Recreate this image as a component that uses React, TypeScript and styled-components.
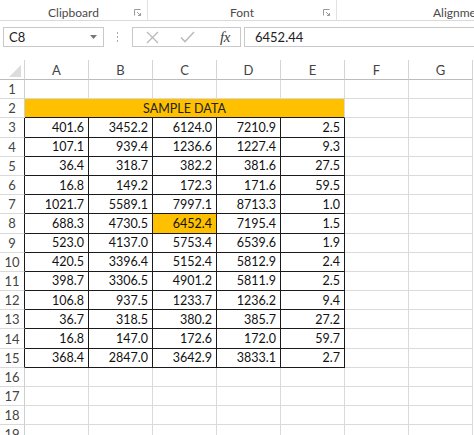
import React from "react";
import styled, { createGlobalStyle } from "styled-components";

const GlobalStyle = createGlobalStyle`
  html, body {
    margin: 0;
    padding: 0;
    background: #fff;
  }
  body {
    width: 474px;
    height: 435px;
    overflow: hidden;
    font-family: Lato, "Liberation Sans", Arial, sans-serif;
  }
`;

const Page = styled.div`
  display: flex;
  flex-direction: column;
  width: 474px;
  height: 435px;
  overflow: hidden;
  background: #fff;
  & > * {
    flex-shrink: 0;
  }
`;

const Ribbon = styled.div`
  display: flex;
  height: 21px;
  border-bottom: 1px solid #dadada;
  box-sizing: border-box;
`;

const Group = styled.div<{ $w: number; $sep?: boolean; $indent?: number }>`
  display: flex;
  align-items: flex-end;
  justify-content: ${(p) => (p.$indent ? "flex-start" : "center")};
  padding: 0 0 0 ${(p) => p.$indent ?? 0}px;
  position: relative;
  width: ${(p) => p.$w}px;
  flex-shrink: 0;
  height: 20px;
  line-height: 15px;
  border-right: ${(p) => (p.$sep ? "1px solid #e2e2e2" : "none")};
  font-size: 12px;
  color: #4a4a4a;
  box-sizing: border-box;
  white-space: nowrap;
`;

const Launcher = styled.svg`
  position: absolute;
  right: 6px;
  bottom: 4px;
`;

const FormulaBar = styled.div`
  display: flex;
  align-items: center;
  height: 39px;
  padding: 6px 0 13px 3px;
  box-sizing: border-box;
`;

const NameBox = styled.div`
  display: flex;
  align-items: center;
  justify-content: space-between;
  width: 101px;
  height: 20px;
  padding: 0 6px 0 5px;
  border: 1px solid #c9c9c9;
  box-sizing: border-box;
  font-size: 13px;
  color: #222;
`;

const Dots = styled.div`
  display: flex;
  flex-direction: column;
  gap: 2px;
  margin: 0 14px 0 13px;
  span {
    width: 1px;
    height: 2px;
    background: #a8a8a8;
  }
`;

const Buttons = styled.div`
  display: flex;
  align-items: center;
  width: 109px;
  height: 20px;
  border: 1px solid #c9c9c9;
  box-sizing: border-box;
  padding: 0 0 0 12px;
`;

const IconSlot = styled.div<{ $w: number }>`
  display: flex;
  align-items: center;
  justify-content: center;
  width: ${(p) => p.$w}px;
  height: 18px;
`;

const Fx = styled.span`
  font-family: "Liberation Serif", "DejaVu Serif", serif;
  font-style: italic;
  font-size: 15px;
  color: #3c3c3c;
  letter-spacing: -0.5px;
`;

const Input = styled.div`
  display: flex;
  align-items: center;
  flex: 1;
  height: 20px;
  margin-left: 3px;
  padding-left: 10px;
  border: 1px solid #c9c9c9;
  border-right: none;
  box-sizing: border-box;
  font-size: 13px;
  color: #222;
`;

const Sheet = styled.div`
  display: grid;
  grid-template-columns: 25px repeat(7, 64px);
  grid-template-rows: 20px repeat(19, 19.2px);
  font-size: 12.5px;
  color: #111;
`;

const Corner = styled.div`
  position: relative;
  border-right: 1px solid #d4d4d4;
  border-bottom: 1px solid #bcbcbc;
  box-sizing: border-box;
`;

const CornerMark = styled.svg`
  position: absolute;
  right: 3px;
  bottom: 2px;
`;

const ColHead = styled.div`
  display: flex;
  align-items: center;
  justify-content: center;
  border-right: 1px solid #d4d4d4;
  border-bottom: 1px solid #bcbcbc;
  box-sizing: border-box;
  color: #444;
  font-size: 13px;
`;

const RowHead = styled.div<{ $edge?: boolean }>`
  display: flex;
  align-items: center;
  justify-content: center;
  border-right: 1px solid ${(p) => (p.$edge ? "#1a1a1a" : "#cfcfcf")};
  border-bottom: 1px solid #d9d9d9;
  box-sizing: border-box;
  color: #444;
  font-size: 13px;
`;

const Cell = styled.div<{ $data?: boolean; $fill?: boolean }>`
  display: flex;
  align-items: center;
  justify-content: flex-end;
  padding-right: 4px;
  border-right: 1px solid ${(p) => (p.$data ? "#1a1a1a" : "#dadada")};
  border-bottom: 1px solid ${(p) => (p.$data ? "#1a1a1a" : "#dadada")};
  background: ${(p) => (p.$fill ? "#ffc000" : "transparent")};
  box-sizing: border-box;
  white-space: nowrap;
`;

const Title = styled.div`
  grid-column: span 5;
  display: flex;
  align-items: center;
  justify-content: center;
  background: #ffc000;
  border-right: 1px solid #dadada;
  border-bottom: 1px solid #1a1a1a;
  box-sizing: border-box;
  font-size: 12.5px;
  color: #222;
`;

const cols = ["A", "B", "C", "D", "E", "F", "G"];

const data: string[][] = [
  ["401.6", "3452.2", "6124.0", "7210.9", "2.5"],
  ["107.1", "939.4", "1236.6", "1227.4", "9.3"],
  ["36.4", "318.7", "382.2", "381.6", "27.5"],
  ["16.8", "149.2", "172.3", "171.6", "59.5"],
  ["1021.7", "5589.1", "7997.1", "8713.3", "1.0"],
  ["688.3", "4730.5", "6452.4", "7195.4", "1.5"],
  ["523.0", "4137.0", "5753.4", "6539.6", "1.9"],
  ["420.5", "3396.4", "5152.4", "5812.9", "2.4"],
  ["398.7", "3306.5", "4901.2", "5811.9", "2.5"],
  ["106.8", "937.5", "1233.7", "1236.2", "9.4"],
  ["36.7", "318.5", "380.2", "385.7", "27.2"],
  ["16.8", "147.0", "172.6", "172.0", "59.7"],
  ["368.4", "2847.0", "3642.9", "3833.1", "2.7"],
];

const LauncherIcon = () => (
  <Launcher width="7" height="7" viewBox="0 0 7 7">
    <path d="M0.5 6.5V0.5H6.5" fill="none" stroke="#9a9a9a" strokeWidth="1" />
    <path d="M3 3L6.5 6.5M4 6.5H6.5V4" fill="none" stroke="#9a9a9a" strokeWidth="1" />
  </Launcher>
);

export default function App() {
  const rows: React.ReactNode[] = [];

  for (let r = 1; r <= 19; r++) {
    const edge = r >= 3 && r <= 15;
    rows.push(
      <RowHead key={`h${r}`} $edge={edge}>
        {r}
      </RowHead>
    );
    if (r === 2) {
      rows.push(<Title key="title">SAMPLE DATA</Title>);
      rows.push(<Cell key="2F" />);
      rows.push(<Cell key="2G" />);
      continue;
    }
    cols.forEach((c, i) => {
      const values = edge ? data[r - 3] : null;
      const inTable = !!values && i < 5;
      rows.push(
        <Cell key={`${r}${c}`} $data={inTable} $fill={r === 8 && c === "C"}>
          {inTable ? values![i] : ""}
        </Cell>
      );
    });
  }

  return (
    <Page>
      <GlobalStyle />
      <Ribbon>
        <Group $w={148} $sep>
          Clipboard
          <LauncherIcon />
        </Group>
        <Group $w={189} $sep>
          Font
          <LauncherIcon />
        </Group>
        <Group $w={200} $indent={96}>
          Alignment
        </Group>
      </Ribbon>

      <FormulaBar>
        <NameBox>
          <span>C8</span>
          <svg width="7" height="4" viewBox="0 0 7 4">
            <path d="M0 0H7L3.5 4Z" fill="#777" />
          </svg>
        </NameBox>
        <Dots>
          <span />
          <span />
          <span />
        </Dots>
        <Buttons>
          <IconSlot $w={14}>
            <svg width="13" height="13" viewBox="0 0 13 13">
              <path d="M1 1L12 12M12 1L1 12" stroke="#b9b9b9" strokeWidth="1.3" />
            </svg>
          </IconSlot>
          <IconSlot $w={56}>
            <svg width="15" height="12" viewBox="0 0 15 12">
              <path d="M1 6.5L5 10.5L14 1" fill="none" stroke="#bdbdbd" strokeWidth="1.6" />
            </svg>
          </IconSlot>
          <IconSlot $w={20}>
            <Fx>fx</Fx>
          </IconSlot>
        </Buttons>
        <Input>6452.44</Input>
      </FormulaBar>

      <Sheet>
        <Corner>
          <CornerMark width="12" height="12" viewBox="0 0 12 12">
            <path d="M12 0V12H0Z" fill="#dcdcdc" />
          </CornerMark>
        </Corner>
        {cols.map((c) => (
          <ColHead key={c}>{c}</ColHead>
        ))}
        {rows}
      </Sheet>
    </Page>
  );
}
